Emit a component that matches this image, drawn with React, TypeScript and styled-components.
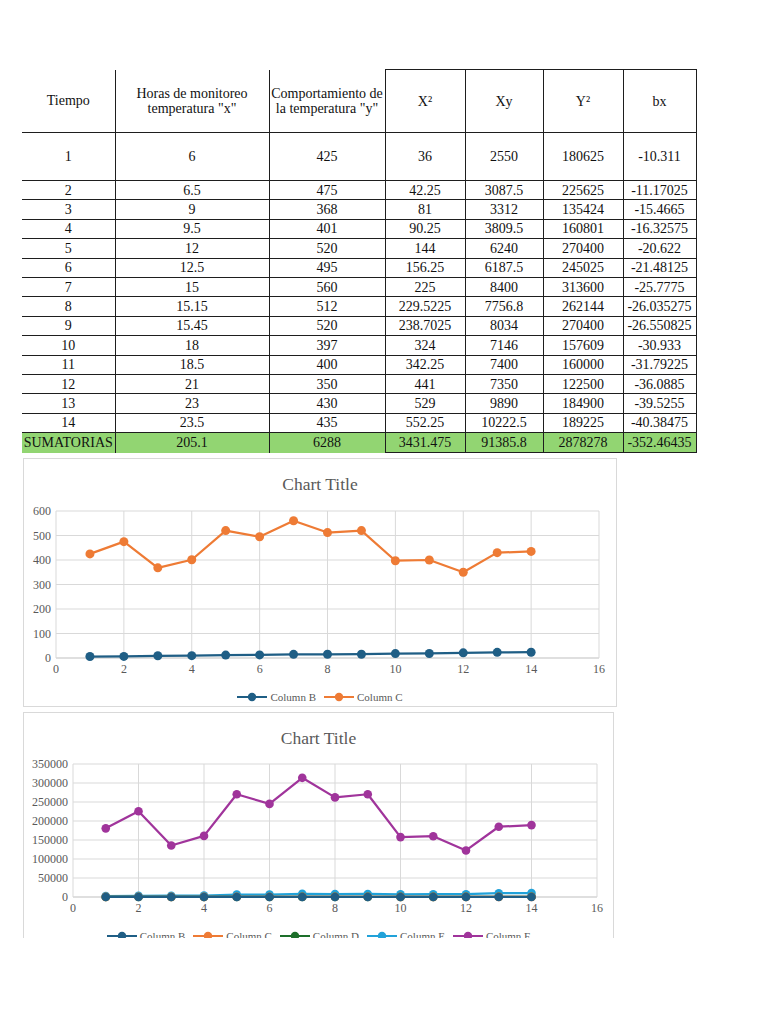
import React from "react";
import styled, { createGlobalStyle } from "styled-components";

const GlobalStyle = createGlobalStyle`
  html, body { margin: 0; padding: 0; background: #ffffff; }
  body { font-family: "Liberation Serif", "Times New Roman", serif; color: #000; }
`;

const Page = styled.main`
  width: 768px;
  min-height: 1024px;
  box-sizing: border-box;
  padding: 69px 0 0 22px;
  display: flex;
  flex-direction: column;
  align-items: flex-start;
`;

const Table = styled.table`
  border-collapse: collapse;
  table-layout: fixed;
  width: 674px;
  font-family: "Liberation Serif", "Times New Roman", serif;
  font-size: 14px;
  line-height: 15px;
  color: #111;
`;

const Row = styled.tr<{ $h: number }>`
  height: ${(p) => p.$h}px;
`;

const LINE = "1px solid #1e1e1e";

const Cell = styled.td<{ $top?: boolean; $fill?: boolean; $noBottom?: boolean }>`
  padding: 0 1px;
  text-align: center;
  vertical-align: middle;
  white-space: nowrap;
  overflow: hidden;
  border-top: ${(p) => (p.$top ? LINE : "none")};
  border-bottom: ${(p) => (p.$noBottom ? "none" : LINE)};
  border-right: ${LINE};
  border-left: none;
  background: ${(p) => (p.$fill ? "#92d572" : "transparent")};
`;

const HeadCell = styled(Cell).attrs({ as: "th" })`
  font-weight: normal;
`;

const ChartStack = styled.div`
  display: flex;
  flex-direction: column;
  gap: 5px;
  margin-top: 5px;
  margin-left: 1px;
`;

const ChartClip = styled.div<{ $h: number }>`
  height: ${(p) => p.$h}px;
  overflow: hidden;
`;

const ChartFrame = styled.section<{ $w: number; $h: number }>`
  width: ${(p) => p.$w}px;
  height: ${(p) => p.$h}px;
  box-sizing: border-box;
  border: 1px solid #d9d9d9;
  background: #fff;
  display: flex;
  flex-direction: column;
  align-items: stretch;
`;

const ChartTitle = styled.h2`
  margin: 0;
  padding-top: 14px;
  height: 29px;
  text-align: center;
  font-family: "Liberation Serif", "Times New Roman", serif;
  font-weight: normal;
  font-size: 17.5px;
  line-height: 22px;
  color: #595959;
`;

const PlotSvg = styled.svg`
  display: block;
  font-family: "Liberation Serif", "Times New Roman", serif;
`;

const Legend = styled.div<{ $mt: number }>`
  margin-top: ${(p) => p.$mt}px;
  height: 16px;
  display: flex;
  justify-content: center;
  align-items: center;
  gap: 8px;
`;

const LegendItem = styled.div`
  display: flex;
  align-items: center;
  gap: 3px;
`;

const LegendLabel = styled.span`
  font-family: "Liberation Serif", "Times New Roman", serif;
  font-size: 11px;
  line-height: 16px;
  color: #595959;
`;

type Series = { name: string; color: string; data: number[] };

const B = [6, 6.5, 9, 9.5, 12, 12.5, 15, 15.15, 15.45, 18, 18.5, 21, 23, 23.5];
const C = [425, 475, 368, 401, 520, 495, 560, 512, 520, 397, 400, 350, 430, 435];
const D = [36, 42.25, 81, 90.25, 144, 156.25, 225, 229.5225, 238.7025, 324, 342.25, 441, 529, 552.25];
const E = [2550, 3087.5, 3312, 3809.5, 6240, 6187.5, 8400, 7756.8, 8034, 7146, 7400, 7350, 9890, 10222.5];
const F = [180625, 225625, 135424, 160801, 270400, 245025, 313600, 262144, 270400, 157609, 160000, 122500, 184900, 189225];
const BX = [-10.311, -11.17025, -15.4665, -16.32575, -20.622, -21.48125, -25.7775, -26.035275, -26.550825, -30.933, -31.79225, -36.0885, -39.5255, -40.38475];

const fmt = (n: number) => String(n);

const COLORS = {
  b: "#1f5e85",
  c: "#ee7b35",
  d: "#1d6f2a",
  e: "#21a2d9",
  f: "#a0349b",
};

type Plot = { left: number; right: number; top: number; bottom: number };

function LineChart(props: {
  width: number;
  height: number;
  plot: Plot;
  yMax: number;
  yStep: number;
  series: Series[];
  r: number;
}) {
  const { width, height, plot, yMax, yStep, series, r } = props;
  const sx = (x: number) => plot.left + (x / 16) * (plot.right - plot.left);
  const sy = (y: number) => plot.bottom - (y / yMax) * (plot.bottom - plot.top);
  const yTicks: number[] = [];
  for (let v = 0; v <= yMax; v += yStep) yTicks.push(v);
  const xTicks = [0, 2, 4, 6, 8, 10, 12, 14, 16];
  return (
    <PlotSvg width={width} height={height} viewBox={`0 0 ${width} ${height}`}>
      {yTicks.map((v) => (
        <line key={"h" + v} x1={plot.left} x2={plot.right} y1={sy(v)} y2={sy(v)} stroke={v === 0 ? "#bfbfbf" : "#d9d9d9"} strokeWidth={1} />
      ))}
      {xTicks.map((v) => (
        <line key={"v" + v} x1={sx(v)} x2={sx(v)} y1={plot.top} y2={plot.bottom} stroke="#d9d9d9" strokeWidth={1} />
      ))}
      {yTicks.map((v) => (
        <text key={"yl" + v} x={plot.left - 5} y={sy(v) + 4} textAnchor="end" fontSize={12} fill="#595959">
          {v}
        </text>
      ))}
      {xTicks.map((v) => (
        <text key={"xl" + v} x={sx(v)} y={plot.bottom + 15} textAnchor="middle" fontSize={12} fill="#595959">
          {v}
        </text>
      ))}
      {series.map((s) => (
        <g key={s.name}>
          <polyline
            points={s.data.map((d, i) => `${sx(i + 1)},${sy(d)}`).join(" ")}
            fill="none"
            stroke={s.color}
            strokeWidth={2.25}
            strokeLinejoin="round"
          />
          {s.data.map((d, i) => (
            <circle key={i} cx={sx(i + 1)} cy={sy(d)} r={r} fill={s.color} />
          ))}
        </g>
      ))}
    </PlotSvg>
  );
}

function LegendSwatch({ color }: { color: string }) {
  return (
    <svg width={30} height={10} viewBox="0 0 30 10">
      <line x1={0} x2={30} y1={5} y2={5} stroke={color} strokeWidth={2} />
      <circle cx={15} cy={5} r={4.2} fill={color} />
    </svg>
  );
}

function ChartLegend({ series, mt }: { series: Series[]; mt: number }) {
  return (
    <Legend $mt={mt}>
      {series.map((s) => (
        <LegendItem key={s.name}>
          <LegendSwatch color={s.color} />
          <LegendLabel>{s.name}</LegendLabel>
        </LegendItem>
      ))}
    </Legend>
  );
}

const sums = ["205.1", "6288", "3431.475", "91385.8", "2878278", "-352.46435"];

export default function App() {
  const chart1: Series[] = [
    { name: "Column B", color: COLORS.b, data: B },
    { name: "Column C", color: COLORS.c, data: C },
  ];
  const chart2Legend: Series[] = [
    { name: "Column B", color: COLORS.b, data: B },
    { name: "Column C", color: COLORS.c, data: C },
    { name: "Column D", color: COLORS.d, data: D },
    { name: "Column E", color: COLORS.e, data: E },
    { name: "Column F", color: COLORS.f, data: F },
  ];
  const chart2Draw: Series[] = [
    { name: "F", color: COLORS.f, data: F },
    { name: "E", color: COLORS.e, data: E },
    { name: "D", color: COLORS.d, data: D },
    { name: "C", color: COLORS.c, data: C },
    { name: "B", color: COLORS.b, data: B },
  ];

  return (
    <>
      <GlobalStyle />
      <Page>
        <Table>
          <colgroup>
            <col style={{ width: 93 }} />
            <col style={{ width: 154 }} />
            <col style={{ width: 116 }} />
            <col style={{ width: 80 }} />
            <col style={{ width: 78 }} />
            <col style={{ width: 80 }} />
            <col style={{ width: 73 }} />
          </colgroup>
          <thead>
            <Row $h={63}>
              <HeadCell>Tiempo</HeadCell>
              <HeadCell>
                Horas de monitoreo
                <br />
                temperatura "x"
              </HeadCell>
              <HeadCell>
                Comportamiento de
                <br />
                la temperatura "y"
              </HeadCell>
              <HeadCell $top>X²</HeadCell>
              <HeadCell $top>Xy</HeadCell>
              <HeadCell $top>Y²</HeadCell>
              <HeadCell $top>bx</HeadCell>
            </Row>
          </thead>
          <tbody>
            {B.map((x, i) => (
              <Row key={i} $h={i === 0 ? 48 : 19.4}>
                <Cell>{i + 1}</Cell>
                <Cell>{fmt(x)}</Cell>
                <Cell>{fmt(C[i])}</Cell>
                <Cell>{fmt(D[i])}</Cell>
                <Cell>{fmt(E[i])}</Cell>
                <Cell>{fmt(F[i])}</Cell>
                <Cell>{fmt(BX[i])}</Cell>
              </Row>
            ))}
            <Row $h={20}>
              <Cell $fill $noBottom>SUMATORIAS</Cell>
              <Cell $fill $noBottom>{sums[0]}</Cell>
              <Cell $fill $noBottom>{sums[1]}</Cell>
              <Cell $fill>{sums[2]}</Cell>
              <Cell $fill>{sums[3]}</Cell>
              <Cell $fill>{sums[4]}</Cell>
              <Cell $fill>{sums[5]}</Cell>
            </Row>
          </tbody>
        </Table>

        <ChartStack>
          <ChartFrame $w={594} $h={249}>
            <ChartTitle>Chart Title</ChartTitle>
            <LineChart
              width={592}
              height={181}
              plot={{ left: 32, right: 575, top: 9, bottom: 156 }}
              yMax={600}
              yStep={100}
              series={chart1}
              r={4.5}
            />
            <ChartLegend series={chart1} mt={6} />
          </ChartFrame>

          <ChartClip $h={226}>
            <ChartFrame $w={591} $h={250}>
              <ChartTitle>Chart Title</ChartTitle>
              <LineChart
                width={589}
                height={166}
                plot={{ left: 49, right: 573, top: 8, bottom: 141 }}
                yMax={350000}
                yStep={50000}
                series={chart2Draw}
                r={4.3}
              />
              <ChartLegend series={chart2Legend} mt={6} />
            </ChartFrame>
          </ChartClip>
        </ChartStack>
      </Page>
    </>
  );
}
